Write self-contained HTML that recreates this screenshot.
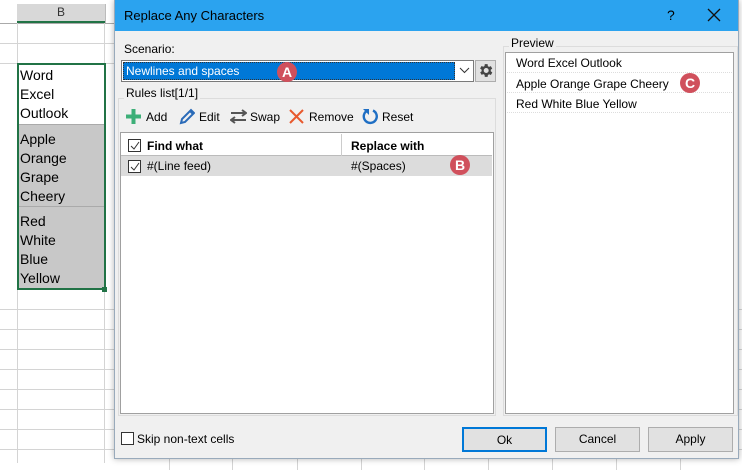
<!DOCTYPE html>
<html><head><style>
*{box-sizing:border-box;margin:0;padding:0}
body{width:742px;height:462px;overflow:hidden;background:#fff;position:relative;font-family:"Liberation Sans",sans-serif;font-size:12px;color:#000}
.a{position:absolute}
.hl{position:absolute;height:1px;background:#d4d4d4}
.vl{position:absolute;width:1px;background:#d4d4d4}
.cell{position:absolute;left:20px;font-size:14px;line-height:19px}
.t{position:absolute;white-space:nowrap}
.badge{position:absolute;width:20px;height:20px;border-radius:50%;background:#d0505c;color:#fff;font-weight:bold;font-size:14px;text-align:center;line-height:20px}
.btn{position:absolute;top:427px;width:85px;height:25px;background:#e1e1e1;border:1px solid #adadad;text-align:center;line-height:23px}
.cb{position:absolute;width:13px;height:13px;border:1px solid #333;background:#fff}
</style></head><body>
<!-- excel -->
<div class="a" style="left:0;top:0;width:742px;height:23px;background:#fff"></div>
<div class="a" style="left:17px;top:4px;width:88px;height:19px;background:#d8d8d8;border-bottom:2px solid #217346;text-align:center;line-height:17px;color:#333">B</div>
<div class="vl" style="left:105px;top:4px;height:19px;background:#bbb"></div>
<div class="hl" style="left:0;top:23px;width:115px;background:#aaa"></div>
<div class="hl" style="left:0;top:43px;width:115px"></div>
<div class="hl" style="left:0;top:63px;width:115px"></div>
<div class="vl" style="left:17px;top:23px;height:440px"></div>
<div class="vl" style="left:104px;top:23px;height:440px"></div>
<div class="a" style="left:17px;top:124px;width:88px;height:165px;background:#c8c8c8"></div>
<div class="hl" style="left:17px;top:124px;width:88px;background:#aaa"></div>
<div class="hl" style="left:17px;top:206px;width:88px;background:#aaa"></div>
<div class="a" style="left:17px;top:63px;width:89px;height:227px;border:2px solid #217346"></div>
<div class="a" style="left:102px;top:287px;width:5px;height:5px;background:#217346"></div>
<div class="cell" style="top:66px">Word<br>Excel<br>Outlook</div>
<div class="cell" style="top:130px">Apple<br>Orange<br>Grape<br>Cheery</div>
<div class="cell" style="top:212px">Red<br>White<br>Blue<br>Yellow</div>
<div class="hl" style="left:0;top:309px;width:742px"></div>
<div class="hl" style="left:0;top:329px;width:742px"></div>
<div class="hl" style="left:0;top:349px;width:742px"></div>
<div class="hl" style="left:0;top:369px;width:742px"></div>
<div class="hl" style="left:0;top:389px;width:742px"></div>
<div class="hl" style="left:0;top:409px;width:742px"></div>
<div class="hl" style="left:0;top:429px;width:742px"></div>
<div class="hl" style="left:0;top:449px;width:742px"></div>
<div class="vl" style="left:169px;top:440px;height:30px"></div>
<div class="vl" style="left:232px;top:440px;height:30px"></div>
<div class="vl" style="left:297px;top:440px;height:30px"></div>
<div class="vl" style="left:361px;top:440px;height:30px"></div>
<div class="vl" style="left:424px;top:440px;height:30px"></div>
<div class="vl" style="left:488px;top:440px;height:30px"></div>
<div class="vl" style="left:552px;top:440px;height:30px"></div>
<div class="vl" style="left:616px;top:440px;height:30px"></div>
<div class="vl" style="left:680px;top:440px;height:30px"></div>
<!-- dialog -->
<div class="a" style="left:114px;top:0;width:625px;height:459px;background:#f0f0f0;border:1px solid #9ab;box-shadow:0 0 6px rgba(0,0,0,.3)"></div>
<div class="a" style="left:115px;top:0;width:623px;height:31px;background:#2ba3ef"></div>
<div class="t" style="left:124px;top:8px;font-size:13px">Replace Any Characters</div>
<div class="t" style="left:667px;top:7px;font-size:14px">?</div>
<svg class="a" style="left:707px;top:8px" width="14" height="14"><path d="M1 1L13 13M13 1L1 13" stroke="#111" stroke-width="1.3"/></svg>
<div class="t" style="left:124px;top:42px">Scenario:</div>
<div class="a" style="left:121px;top:60px;width:353px;height:22px;background:#fff;border:1px solid #7a7a7a"></div>
<div class="a" style="left:123px;top:62px;width:332px;height:18px;background:#0078d7;border:1px dotted #333;color:#fff;padding-left:2px;line-height:16px">Newlines and spaces</div>
<svg class="a" style="left:459px;top:67px" width="11" height="7"><path d="M1 1L5.5 5.5L10 1" stroke="#333" fill="none"/></svg>
<div class="a" style="left:475px;top:60px;width:21px;height:22px;background:#e1e1e1;border:1px solid #adadad"></div>
<svg class="a" style="left:477px;top:62px" width="17" height="17" viewBox="0 0 24 24"><path fill="#444" d="M19.4 13a7.5 7.5 0 000-2l2.1-1.6-2-3.5-2.5 1a7.6 7.6 0 00-1.7-1L15 3h-4l-.4 2.7a7.6 7.6 0 00-1.7 1l-2.5-1-2 3.5L6.6 11a7.5 7.5 0 000 2l-2.1 1.6 2 3.5 2.5-1a7.6 7.6 0 001.7 1L11 21h4l.4-2.7a7.6 7.6 0 001.7-1l2.5 1 2-3.5zM13 15.5A3.5 3.5 0 1113 8.5a3.5 3.5 0 010 7z"/></svg>
<div class="badge" style="left:277px;top:62px">A</div>
<!-- rules group -->
<div class="a" style="left:118px;top:98px;width:378px;height:318px;border:1px solid #dcdcdc"></div>
<div class="t" style="left:124px;top:86px;background:#f0f0f0;padding:0 2px">Rules list[1/1]</div>
<svg class="a" style="left:126px;top:109px" width="15" height="15"><path d="M5.5 0h4v5.5H15v4H9.5V15h-4V9.5H0v-4h5.5z" fill="#3daf78"/></svg>
<div class="t" style="left:146px;top:110px">Add</div>
<svg class="a" style="left:179px;top:108px" width="16" height="17"><path d="M2 15l1-4L12 2l3 3-9 9zM11 3l3 3" stroke="#2a6bb8" stroke-width="2" fill="none"/></svg>
<div class="t" style="left:199px;top:110px">Edit</div>
<svg class="a" style="left:230px;top:109px" width="17" height="15"><path d="M1 4h15M1 11h15M12 1l4 3-4 3M5 8l-4 3 4 3" stroke="#555" stroke-width="2" fill="none"/></svg>
<div class="t" style="left:250px;top:110px">Swap</div>
<svg class="a" style="left:289px;top:109px" width="15" height="15"><path d="M1 1L14 14M14 1L1 14" stroke="#e8592e" stroke-width="2"/></svg>
<div class="t" style="left:309px;top:110px">Remove</div>
<svg class="a" style="left:361px;top:107px" width="18" height="18"><path d="M5 4.5A6.5 6.5 0 1 0 12 3.5" stroke="#1f6fc4" stroke-width="2.4" fill="none"/><path d="M2 2h6v6z" fill="#1f6fc4"/></svg>
<div class="t" style="left:382px;top:110px">Reset</div>
<div class="a" style="left:120px;top:132px;width:374px;height:282px;background:#fff;border:1px solid #a0a0a0"></div>
<div class="a" style="left:121px;top:133px;width:371px;height:23px;background:#fff;border-bottom:1px solid #bbb"></div>
<div class="vl" style="left:341px;top:134px;height:22px;background:#ccc"></div>
<div class="cb" style="left:128px;top:139px"></div>
<svg class="a" style="left:130px;top:141px" width="10" height="9"><path d="M1 5l3 3 5-7" stroke="#333" fill="none"/></svg>
<div class="t" style="left:147px;top:139px;font-weight:bold">Find what</div>
<div class="t" style="left:351px;top:139px;font-weight:bold">Replace with</div>
<div class="a" style="left:121px;top:156px;width:371px;height:20px;background:#dcdcdc"></div>
<div class="cb" style="left:128px;top:160px"></div>
<svg class="a" style="left:130px;top:162px" width="10" height="9"><path d="M1 5l3 3 5-7" stroke="#333" fill="none"/></svg>
<div class="t" style="left:147px;top:159px">#(Line feed)</div>
<div class="t" style="left:351px;top:159px">#(Spaces)</div>
<div class="badge" style="left:450px;top:155px">B</div>
<!-- preview -->
<div class="a" style="left:503px;top:46px;width:235px;height:370px;border:1px solid #dcdcdc"></div>
<div class="t" style="left:509px;top:36px;background:#f0f0f0;padding:0 2px">Preview</div>
<div class="a" style="left:505px;top:52px;width:229px;height:362px;background:#fff;border:1px solid #a0a0a0"></div>
<div class="t" style="left:516px;top:56px">Word Excel Outlook</div>
<div class="t" style="left:516px;top:77px">Apple Orange Grape Cheery</div>
<div class="t" style="left:516px;top:97px">Red White Blue Yellow</div>
<div class="a" style="left:507px;top:72px;width:225px;border-top:1px dotted #ddd"></div>
<div class="a" style="left:507px;top:92px;width:225px;border-top:1px dotted #ddd"></div>
<div class="a" style="left:507px;top:112px;width:225px;border-top:1px dotted #ddd"></div>
<div class="badge" style="left:680px;top:73px">C</div>
<!-- bottom -->
<div class="cb" style="left:121px;top:432px"></div>
<div class="t" style="left:137px;top:432px">Skip non-text cells</div>
<div class="btn" style="left:462px;border:2px solid #0078d7">Ok</div>
<div class="btn" style="left:555px">Cancel</div>
<div class="btn" style="left:648px">Apply</div>
</body></html>
